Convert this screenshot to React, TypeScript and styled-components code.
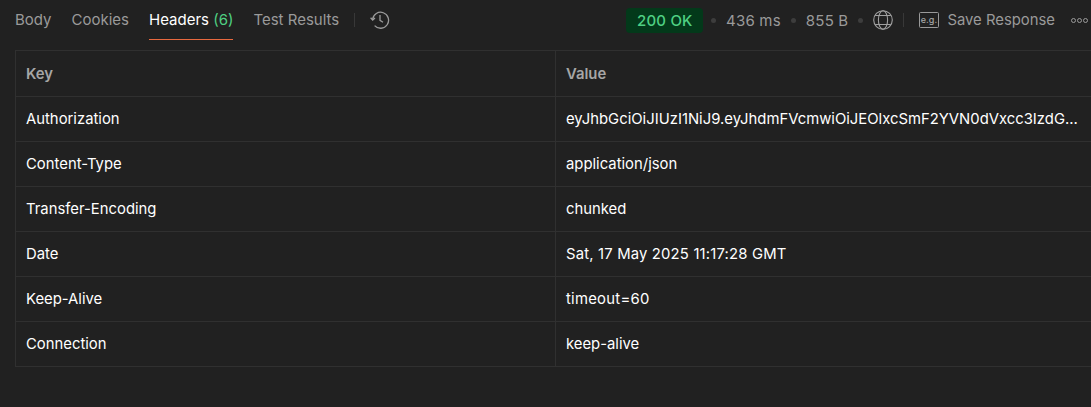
import React from "react";
import styled, { createGlobalStyle } from "styled-components";

const Global = createGlobalStyle`
  html, body { margin: 0; padding: 0; background: #212121; overflow: hidden; }
  body { font-family: Inter, "Noto Sans", sans-serif; }
`;

const Page = styled.div`
  width: 1091px;
  height: 407px;
  background: #212121;
  overflow: hidden;
  display: flex;
  flex-direction: column;
`;

const Toolbar = styled.div`
  height: 40px;
  margin-bottom: 10px;
  display: flex;
  align-items: stretch;
  justify-content: space-between;
  padding-left: 15px;
`;

const Tabs = styled.div`
  display: flex;
  align-items: stretch;
  gap: 20px;
`;

const Tab = styled.div<{ $active?: boolean }>`
  font-size: 15px;
  line-height: 40px;
  color: ${(p) => (p.$active ? "#ffffff" : "#9a9a9a")};
  box-sizing: border-box;
  border-bottom: 1px solid ${(p) => (p.$active ? "#e8693f" : "transparent")};
`;

const Count = styled.span`
  color: #4fd083;
`;

const Divider = styled.div<{ $h: number; $margin: string }>`
  width: 1px;
  height: ${(p) => p.$h}px;
  background: #383838;
  align-self: center;
  margin: ${(p) => p.$margin};
`;

const Left = styled.div`
  display: flex;
  align-items: stretch;
`;

const HistoryButton = styled.div`
  display: flex;
  align-items: center;
  margin-left: 15px;
  color: #9a9a9a;
  margin-bottom: 1px;
`;

const Right = styled.div`
  display: flex;
  align-items: center;
  font-size: 15px;
  color: #9a9a9a;
`;

const Status = styled.div`
  height: 25px;
  padding: 0 10.5px;
  margin-right: -2px;
  background: #03391a;
  color: #4fd083;
  border-radius: 4px;
  line-height: 25px;
  font-weight: 500;
  letter-spacing: 0.2px;
`;

const Dot = styled.div`
  width: 5px;
  height: 5px;
  border-radius: 50%;
  background: #3d3d3d;
  margin: 0 10px;
`;

const Metric = styled.span`
  letter-spacing: 0.2px;
`;

const SaveLabel = styled.span`
  font-size: 14.85px;
`;

const More = styled.div`
  display: flex;
  gap: 1px;
  margin-left: 16px;
  margin-right: 3px;
`;

const Ring = styled.div`
  width: 3px;
  height: 3px;
  border: 1px solid #9a9a9a;
  border-radius: 50%;
`;

const Table = styled.div`
  margin-left: 15px;
  width: 1100px;
  box-sizing: border-box;
  border: 1px solid #303030;
  border-right: none;
`;

const Row = styled.div<{ $head?: boolean }>`
  display: grid;
  grid-template-columns: 539px 1fr;
  height: ${(p) => (p.$head ? 46 : 45)}px;
  box-sizing: border-box;
  border-bottom: 1px solid #303030;
  &:last-child { border-bottom: none; height: 44px; }
`;

const Cell = styled.div<{ $head?: boolean; $value?: boolean; $spacing?: number }>`
  font-size: 14.85px;
  line-height: 20px;
  display: flex;
  align-items: center;
  padding-left: 10px;
  color: ${(p) => (p.$head ? "#a6a6a6" : "#ffffff")};
  font-weight: ${(p) => (p.$head ? 600 : 400)};
  border-left: ${(p) => (p.$value ? "1px solid #303030" : "none")};
  letter-spacing: ${(p) => p.$spacing ?? 0}px;
  white-space: nowrap;
  overflow: hidden;
`;

const rows: { k: string; v: string; spacing?: number }[] = [
  { k: "Authorization", v: "eyJhbGciOiJIUzI1NiJ9.eyJhdmFVcmwiOiJEOlxcSmF2YVN0dVxcc3IzdG..." },
  { k: "Content-Type", v: "application/json" },
  { k: "Transfer-Encoding", v: "chunked" },
  { k: "Date", v: "Sat, 17 May 2025 11:17:28 GMT", spacing: 0.17 },
  { k: "Keep-Alive", v: "timeout=60", spacing: 0.25 },
  { k: "Connection", v: "keep-alive" },
];

export default function App() {
  return (
    <Page>
      <Global />
      <Toolbar>
        <Left>
          <Tabs>
            <Tab>Body</Tab>
            <Tab>Cookies</Tab>
            <Tab $active>Headers <Count>(6)</Count></Tab>
            <Tab>Test Results</Tab>
          </Tabs>
          <Divider $h={14} $margin="0 0 0 15px" />
          <HistoryButton>
            <svg width="20" height="20" viewBox="0 0 20 20" fill="none" stroke="#9a9a9a" strokeWidth="1.3">
              <path d="M2.6 9.4A8 8 0 1 1 4.6 15.6" />
              <path d="M0.6 7.8l2.1 2.2 2.3-2" />
              <path d="M10 5V10.3l3 2" />
            </svg>
          </HistoryButton>
        </Left>
        <Right>
          <Status>200 OK</Status>
          <Dot />
          <Metric>436 ms</Metric>
          <Dot />
          <Metric>855 B</Metric>
          <Dot />
          <svg width="20" height="20" viewBox="0 0 20 20" fill="none" stroke="#a0a0a0" strokeWidth="1.1">
            <circle cx="10" cy="10" r="9.3" />
            <ellipse cx="10" cy="10" rx="4.6" ry="9.3" />
            <path d="M2.2 5.5h15.6M2.2 14.5h15.6" />
          </svg>
          <Divider $h={14} $margin="0 15px 0 10px" />
          <svg width="20" height="16" viewBox="0 0 20 16" fill="none" style={{ marginRight: 8 }}>
            <rect x="0.5" y="0.5" width="19" height="15" rx="1" stroke="#9a9a9a" />
            <text x="10" y="10.8" textAnchor="middle" fontSize="9" fontWeight="500" fontFamily="Inter" fill="#a6a6a6">e.g.</text>
          </svg>
          <SaveLabel>Save Response</SaveLabel>
          <More><Ring /><Ring /><Ring /></More>
        </Right>
      </Toolbar>
      <Table>
        <Row $head>
          <Cell $head>Key</Cell>
          <Cell $head $value>Value</Cell>
        </Row>
        {rows.map((r) => (
          <Row key={r.k}>
            <Cell>{r.k}</Cell>
            <Cell $value $spacing={r.spacing}>{r.v}</Cell>
          </Row>
        ))}
      </Table>
    </Page>
  );
}
